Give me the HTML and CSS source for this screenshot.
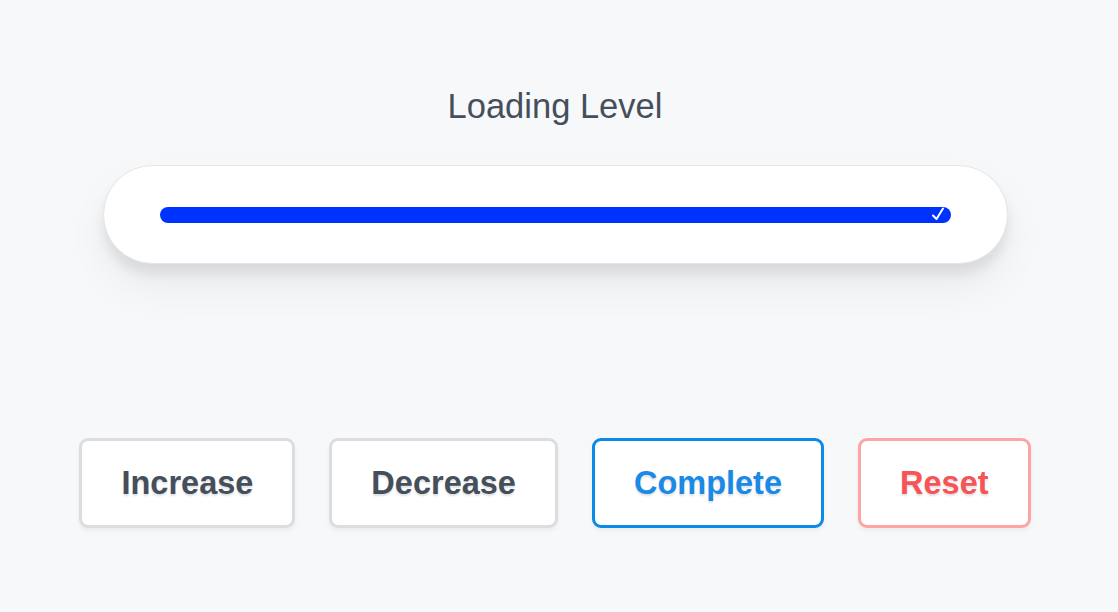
FILE: index.html
```html
<!DOCTYPE html>
<html lang="en">
<head>
    <meta charset="UTF-8">
    <meta name="viewport" content="width=device-width, initial-scale=1.0">
    <title>Loading Level</title>
    <link rel="stylesheet" href="styles.css">
</head>
<body>
    <div class="page">
        <h1 class="title">Loading Level</h1>

        <!-- progress track -->
        <div class="track">
            <div class="bar" style="width: 100%;">
                <svg class="check" viewBox="0 0 14 14" xmlns="http://www.w3.org/2000/svg">
                    <path d="M2 8.5L5.5 12L12 1.5"/>
                </svg>
            </div>
        </div>

        <!-- actions -->
        <div class="actions">
            <button class="btn">Increase</button>
            <button class="btn">Decrease</button>
            <button class="btn btn-complete">Complete</button>
            <button class="btn btn-reset">Reset</button>
        </div>
    </div>
</body>
</html>
```

FILE: styles.css
```css
* {
    margin: 0;
    padding: 0;
    box-sizing: border-box;
}

body {
    font-family: "Liberation Sans", Arial, sans-serif;
    background: #f7f8fa;
    height: 612px;
    overflow: hidden;
}

.page {
    width: 1110px;
    display: flex;
    flex-direction: column;
    align-items: center;
    padding-top: 85px;
}

.title {
    font-weight: 400;
    font-size: 34.5px;
    line-height: 42px;
    color: #454f5b;
    margin-bottom: 38px;
}

/* progress track */
.track {
    width: 905px;
    height: 99px;
    background: #fff;
    border: 1px solid #e4e5e8;
    border-radius: 50px;
    padding: 0 56px;
    display: flex;
    align-items: center;
    box-shadow: 0 10px 12px rgba(0, 0, 0, 0.08), 0 22px 40px rgba(0, 0, 0, 0.06);
}

.bar {
    height: 16px;
    background: #0032ff;
    border-radius: 8px;
    display: flex;
    align-items: center;
    justify-content: flex-end;
    padding-right: 6px;
}

.check {
    width: 14px;
    height: 14px;
    fill: none;
    stroke: #fff;
    stroke-width: 2;
    stroke-linecap: round;
    stroke-linejoin: round;
    margin-top: -2px;
}

/* buttons */
.actions {
    display: flex;
    gap: 34px;
    margin-top: 174px;
}

.btn {
    font-family: "Liberation Sans", Arial, sans-serif;
    font-weight: 700;
    font-size: 32.5px;
    height: 90px;
    padding: 0 39px;
    background: #fff;
    color: #454f5b;
    border: 3px solid #dcdde0;
    border-radius: 9px;
    text-shadow: 0 2px 2px rgba(0, 0, 0, 0.12);
    box-shadow: 0 3px 4px rgba(0, 0, 0, 0.05);
    cursor: pointer;
}

.btn-complete {
    color: #1b8ae6;
    border-color: #0a8ae9;
}

.btn-reset {
    color: #f65457;
    border-color: #ffa4a5;
}
```
